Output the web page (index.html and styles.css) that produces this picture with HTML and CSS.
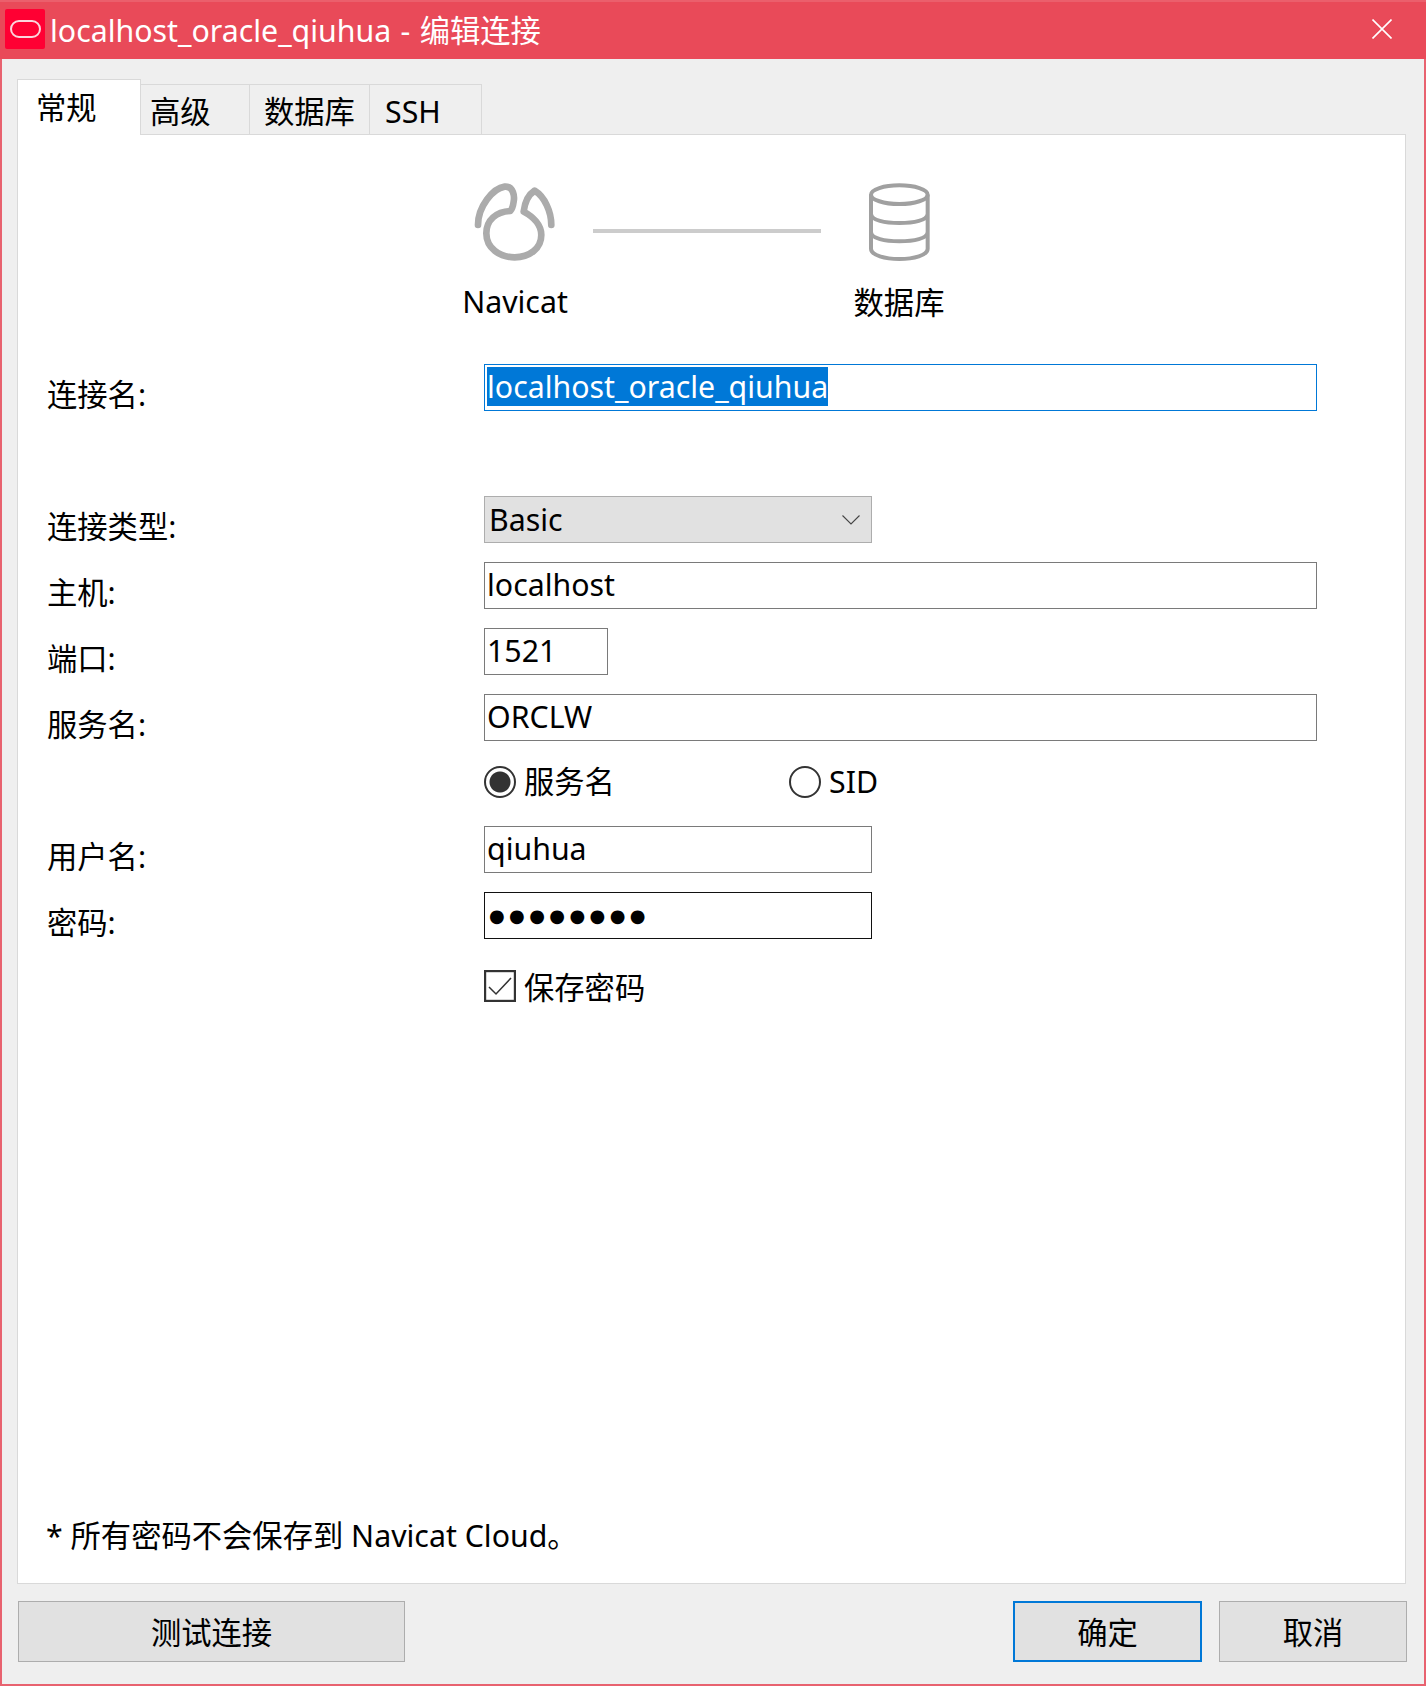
FILE: index.html
```html
<!DOCTYPE html>
<html lang="zh-CN">
<head>
<meta charset="utf-8">
<title>localhost_oracle_qiuhua - 编辑连接</title>
<link rel="stylesheet" href="styles.css">
</head>
<body>
<div class="window">
  <header class="titlebar">
    <div class="app-icon"><div class="app-icon-ring"></div></div>
    <div class="title">localhost_oracle_qiuhua - 编辑连接</div>
    <svg class="close" viewBox="0 0 20 20"><path d="M0.5 0.5 L19.5 19.5 M19.5 0.5 L0.5 19.5"/></svg>
  </header>
  <main class="content">
    <nav class="tabs">
      <div class="tab tab-active">常规</div>
      <div class="tab tab-2">高级</div>
      <div class="tab tab-3">数据库</div>
      <div class="tab tab-4">SSH</div>
    </nav>
    <section class="panel">
      <div class="diagram">
        <div class="node node-navicat">
          <svg class="logo" viewBox="100 60 250 250"><path d="M115 195 C115 140 160 85 195 80 C222 78 225 110 222 125 C220 140 215 150 212 153 C170 155 140 180 140 220 C140 265 180 292 225 292 C270 292 305 265 305 225 C305 195 280 170 252 155 C255 130 265 105 285 92 C315 110 335 155 335 195"/></svg>
          <div class="node-label">Navicat</div>
        </div>
        <div class="connector"></div>
        <div class="node node-db">
          <svg class="db" viewBox="1280 65 195 240"><ellipse cx="1377" cy="103" rx="85" ry="28"/><path d="M1292 103 V265 C1292 285 1335 296 1377 296 C1420 296 1462 285 1462 265 V103 M1292 160 C1292 180 1335 188 1377 188 C1420 188 1462 180 1462 160 M1292 215 C1292 235 1335 243 1377 243 C1420 243 1462 235 1462 215"/></svg>
          <div class="node-label">数据库</div>
        </div>
      </div>
      <div class="form">
        <div class="label">连接名:</div>
        <div class="field field-focus"><span class="selected">localhost_oracle_qiuhua</span></div>
        <div class="spacer"></div>
        <div class="label">连接类型:</div>
        <div class="select field-md"><span>Basic</span><svg class="chevron" viewBox="0 0 18 10"><path d="M0.5 0.5 L9 9 L17.5 0.5"/></svg></div>
        <div class="label">主机:</div>
        <div class="field">localhost</div>
        <div class="label">端口:</div>
        <div class="field field-sm">1521</div>
        <div class="label">服务名:</div>
        <div class="field">ORCLW</div>
        <div class="label"></div>
        <div class="radios">
          <div class="radio-item radio-first"><span class="radio radio-on"></span><span>服务名</span></div>
          <div class="radio-item"><span class="radio"></span><span>SID</span></div>
        </div>
        <div class="label">用户名:</div>
        <div class="field field-md">qiuhua</div>
        <div class="label">密码:</div>
        <div class="field field-md field-dark"><span class="dots">●●●●●●●●</span></div>
        <div class="label"></div>
        <div class="check-item">
          <svg class="check" viewBox="0 0 32 32"><rect x="1" y="1" width="30" height="30"/><path d="M5 17 L12 24 L27 8"/></svg>
          <span class="check-text">保存密码</span>
        </div>
      </div>
      <div class="note">* 所有密码不会保存到 Navicat Cloud。</div>
    </section>
    <footer class="actions">
      <button class="btn btn-test">测试连接</button>
      <div class="actions-right">
        <button class="btn btn-primary">确定</button>
        <button class="btn">取消</button>
      </div>
    </footer>
  </main>
</div>
</body>
</html>
```
FILE: styles.css
```css
* { box-sizing: border-box; }
html, body { margin: 0; padding: 0; }
body {
  width: 1426px;
  height: 1686px;
  font-family: "Noto Sans", "Noto Sans CJK SC", sans-serif;
  font-size: 30.3px;
  color: #000;
  background: #efefef;
}
.window {
  height: 1686px;
  display: flex;
  flex-direction: column;
  border: 2px solid #e8626f;
  border-top: 0;
}
.titlebar {
  height: 59px;
  flex: none;
  margin: 0 -2px;
  padding: 9px 34px 0 5px;
  display: flex;
  align-items: flex-start;
  background: #e94a59;
  border-top: 2px solid #eb5f6c;
  color: #fff;
}
.app-icon {
  width: 40px;
  height: 40px;
  margin-top: -2px;
  background: #ff0033;
  border-radius: 2px;
  display: flex;
  align-items: center;
  justify-content: center;
}
.app-icon-ring {
  width: 31px;
  height: 18px;
  border: 2px solid #fbd5dc;
  border-radius: 9px;
}
.title {
  margin-left: 5px;
  margin-top: -4px;
  line-height: 48px;
  word-spacing: 1.5px;
  white-space: nowrap;
  flex: 1;
}
.close {
  width: 20px;
  height: 20px;
  margin-top: 8px;
  fill: none;
  stroke: #fff;
  stroke-width: 1.6;
}
.content {
  flex: 1;
  display: flex;
  flex-direction: column;
  padding: 20px 17px 22px 16px;
  min-height: 0;
}
.tabs {
  height: 56px;
  flex: none;
  display: flex;
  align-items: flex-end;
  position: relative;
  z-index: 1;
  margin: 0 0 -1px -1px;
}
.tab {
  height: 51px;
  line-height: 54px;
  border: 1px solid #d9d9d9;
  border-left: 0;
  background: #efefef;
  padding-left: 15px;
  white-space: nowrap;
}
.tab-active {
  width: 124px;
  height: 56px;
  background: #fff;
  border-left: 1px solid #d9d9d9;
  border-bottom: 0;
  padding-left: 18px;
  line-height: 56px;
}
.tab-2 { width: 109px; padding-left: 9px; }
.tab-3 { width: 120px; padding-left: 14px; }
.tab-4 { width: 112px; padding-left: 15px; }
.panel {
  flex: 1;
  background: #fff;
  border: 1px solid #d9d9d9;
  display: flex;
  flex-direction: column;
  margin: 0 1px 0 -1px;
  padding: 48px 0 0 0;
  min-height: 0;
}
.diagram {
  display: flex;
  align-items: flex-start;
  height: 181px;
  margin-left: 422px;
}
.node {
  width: 150px;
  display: flex;
  flex-direction: column;
  align-items: center;
}
.node-db { width: 120px; margin-left: 18px; }
.logo {
  width: 83.3px;
  height: 83.3px;
  margin-top: -3px;
  fill: none;
  stroke: #ababab;
  stroke-width: 20;
  stroke-linecap: round;
  stroke-linejoin: round;
}
.db {
  width: 65px;
  height: 80px;
  margin-top: -1px;
  fill: none;
  stroke: #a0a0a0;
  stroke-width: 12;
}
.node-label {
  height: 44px;
  line-height: 44px;
  margin-top: 17px;
  white-space: nowrap;
}
.node-db .node-label { margin-top: 19px; }
.connector {
  width: 228px;
  height: 4px;
  margin: 46px 0 0 3px;
  background: #cccccc;
}
.form {
  display: grid;
  grid-template-columns: 437px 1fr;
  grid-auto-rows: 47px;
  row-gap: 19px;
  padding-left: 29px;
  padding-right: 88px;
}
.spacer { grid-column: 1 / 3; }
.label {
  line-height: 47px;
  padding-top: 7px;
  white-space: nowrap;
}
.field {
  height: 47px;
  background: #fff;
  border: 1px solid #7a7a7a;
  line-height: 44px;
  padding-left: 2px;
  white-space: nowrap;
}
.field-focus {
  border-color: #0078d7;
  padding-top: 2px;
  line-height: 39px;
}
.selected {
  display: inline-block;
  height: 39px;
  background: #0078d7;
  color: #fff;
}
.field-md { width: 388px; }
.field-sm { width: 124px; }
.field-dark { border-color: #111; }
.dots {
  font-family: "DejaVu Sans", sans-serif;
  font-size: 18px;
  letter-spacing: 4.4px;
  line-height: 45px;
  padding-left: 2px;
  display: block;
}
.select {
  height: 47px;
  background: #e1e1e1;
  border: 1px solid #adadad;
  padding: 0 11px 0 4px;
  line-height: 42px;
  display: flex;
  align-items: center;
  justify-content: space-between;
}
.chevron {
  width: 18px;
  height: 10px;
  fill: none;
  stroke: #444;
  stroke-width: 1.1;
}
.radios {
  display: flex;
  align-items: center;
  margin-top: -3px;
}
.radio-item {
  display: flex;
  align-items: center;
  gap: 8px;
  line-height: 42px;
}
.radio-first { width: 305px; }
.radio {
  width: 32px;
  height: 32px;
  flex: none;
  border: 2px solid #333;
  border-radius: 50%;
  background: #fff;
}
.radio-on {
  background: radial-gradient(circle, #333 0, #333 10px, #fff 11px);
}
.check-item {
  display: flex;
  align-items: center;
  gap: 8px;
  margin-top: 12px;
  height: 32px;
  line-height: 44px;
}
.check-text { margin-top: 4px; }
.check {
  width: 32px;
  height: 32px;
  flex: none;
  fill: #fff;
  stroke: #333;
}
.check rect { stroke-width: 2.4; }
.check path { fill: none; stroke-width: 1.5; }
.note {
  margin-top: auto;
  margin-bottom: 24px;
  padding-left: 28px;
  line-height: 46px;
  white-space: nowrap;
}
.actions {
  flex: none;
  height: 61px;
  margin-top: 17px;
  display: flex;
  justify-content: space-between;
}
.actions-right { display: flex; gap: 17px; }
.btn {
  width: 188px;
  height: 61px;
  font: inherit;
  color: inherit;
  background: #e1e1e1;
  border: 1px solid #adadad;
  padding: 2px 0 0 0;
  line-height: 50px;
  border-radius: 0;
}
.btn-test { width: 387px; }
.btn-primary { width: 189px; border: 2px solid #0078d7; }
```
